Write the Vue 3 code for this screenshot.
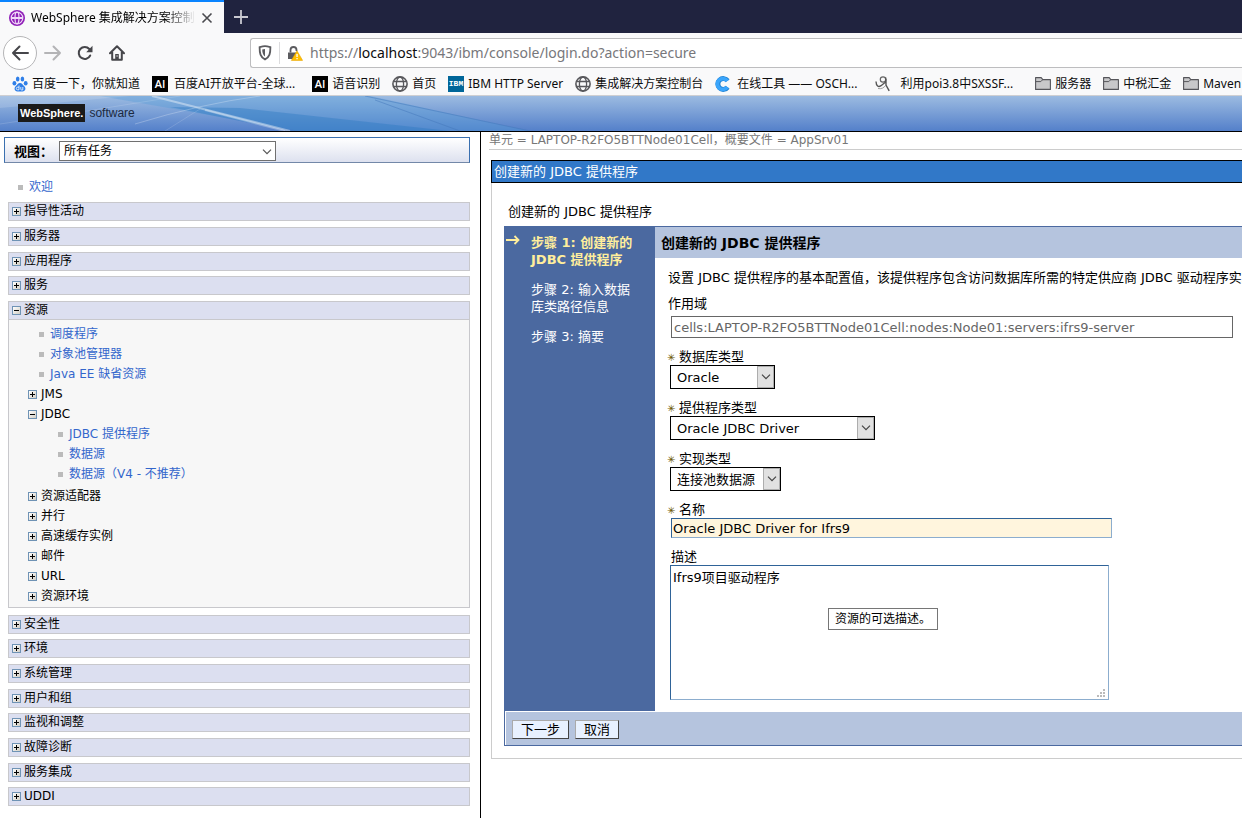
<template>
  <div class="browser">
    <header class="chrome">
      <div class="tab-strip">
        <div class="tab">
          <svg class="tab-icon" viewBox="0 0 16 16">
            <circle cx="8" cy="8" r="8" fill="#8f1fb8" />
            <g fill="none" stroke="#f0d8f8">
              <circle cx="8" cy="8" r="5.800" stroke-width="1.200" />
              <ellipse cx="8" cy="8" rx="2" ry="5.800" stroke-width="1.200" />
              <path d="M2 8h12" stroke-width="2" />
            </g>
          </svg>
          <span class="tab-title">WebSphere 集成解决方案控制台</span>
          <button class="plain" aria-label="关闭标签页">
            <svg width="12" height="12" viewBox="0 0 12 12">
              <path d="M1.5 1.5l9 9M10.5 1.5l-9 9" stroke="#4a4a4f" stroke-width="1.6" />
            </svg>
          </button>
        </div>
        <button class="plain new-tab" aria-label="新建标签页">
          <svg width="14" height="14" viewBox="0 0 14 14">
            <path d="M7 0v14M0 7h14" stroke="#c9c9d1" stroke-width="1.8" />
          </svg>
        </button>
      </div>

      <div class="nav-bar">
        <button class="plain back" aria-label="后退">
          <svg width="18" height="16" viewBox="0 0 18 16">
            <path d="M8.500 1.500L2 8l6.500 6.500M2 8h15" fill="none" stroke="#46464a" stroke-width="2" stroke-linecap="round" stroke-linejoin="round" />
          </svg>
        </button>
        <div class="nav-buttons">
          <button class="plain" aria-label="前进">
            <svg width="18" height="16" viewBox="0 0 18 16">
              <path d="M9.500 1.500L16 8l-6.500 6.500M16 8H1" fill="none" stroke="#b4b4b6" stroke-width="2" stroke-linecap="round" stroke-linejoin="round" />
            </svg>
          </button>
          <button class="plain" aria-label="刷新">
            <svg width="16" height="16" viewBox="0 0 16 16">
              <path d="M13.200 10.500A6 6 0 1 1 12.300 4" fill="none" stroke="#46464a" stroke-width="2" stroke-linecap="round" />
              <path d="M15.500 0.800v6.400H9.200z" fill="#46464a" />
            </svg>
          </button>
          <button class="plain" aria-label="主页">
            <svg width="16" height="16" viewBox="0 0 16 16">
              <path d="M1 8.200L8 1.300l7 6.900M3.200 7v7.800h9.600V7" fill="none" stroke="#46464a" stroke-width="2" stroke-linejoin="round" stroke-linecap="round" />
              <path d="M6.200 14.500V9h3.600v5.500z" fill="#46464a" />
              <path d="M7.600 10.200h.9v1.500h-.9z" fill="#f9f9fa" />
            </svg>
          </button>
        </div>
        <div class="url-bar">
          <svg width="14" height="16" viewBox="0 0 14 16">
            <path d="M7 1.200C5 1.200 3 1.800 1.600 2.200c0 6 .6 9.800 5.400 12.200 4.800-2.400 5.400-6.200 5.400-12.200C11 1.800 9 1.200 7 1.200z" fill="none" stroke="#5b5b5f" stroke-width="1.800" />
            <path d="M7 4v7.600C4.900 10 4.300 7.800 4.200 4.600z" fill="#5b5b5f" />
          </svg>
          <span class="url-split"></span>
          <svg width="16" height="16" viewBox="0 0 16 16">
            <path d="M3.500 7.500V5a3 3 0 0 1 6 0v1" fill="none" stroke="#5b5b5f" stroke-width="1.800" />
            <path d="M1 7.500h10V14H1z" fill="#5b5b5f" />
            <path d="M10 5.800L15.600 15.400H4.400z" fill="#ffbf00" stroke="#e8a400" stroke-width=".6" stroke-linejoin="round" />
            <path d="M9.400 9h1.300v3H9.400zM9.400 13h1.300v1.200H9.400z" fill="#fff" />
          </svg>
          <span class="url-text">https://<b>localhost</b>:9043/ibm/console/login.do?action=secure</span>
        </div>
      </div>

      <nav class="bookmarks">
        <a v-for="(mark, i) in bookmarks" :key="i" href="#" :class="mark.icon">
          <svg v-if="mark.icon === 'paw'" viewBox="0 0 16 16">
            <g fill="#2f7fe8">
              <ellipse cx="2.400" cy="7.200" rx="1.900" ry="2.300" />
              <ellipse cx="5.700" cy="3" rx="1.800" ry="2.500" />
              <ellipse cx="10.400" cy="3" rx="1.800" ry="2.500" />
              <ellipse cx="13.700" cy="7.200" rx="1.900" ry="2.300" />
              <path d="M8 7c2 0 2.600 1.800 4 3 2.600 2.200 1.300 5.400-1.300 5.400H5.300C2.700 15.400 1.400 12.200 4 10c1.400-1.200 2-3 4-3z" />
            </g>
            <path d="M7 9.500v4.300H5.600a1.300 1.300 0 0 1 0-2.600H7M8.800 11v2.300c0 .6.300.7 2 .6V11" fill="none" stroke="#fff" stroke-width=".8" />
          </svg>
          <svg v-else-if="mark.icon === 'ai'" viewBox="0 0 16 16">
            <rect width="16" height="16" fill="#000" />
            <text x="8" y="12" text-anchor="middle" font-family="Open Sans" font-size="11" font-weight="600" fill="#fff">AI</text>
          </svg>
          <svg v-else-if="mark.icon === 'globe'" viewBox="0 0 16 16">
            <g fill="none" stroke="#58585c" stroke-width="1.300">
              <circle cx="8" cy="8" r="7.100" stroke-width="1.600" />
              <ellipse cx="8" cy="8" rx="3.600" ry="7" />
              <path d="M1.500 5.500h13M1.500 10.500h13" />
            </g>
          </svg>
          <svg v-else-if="mark.icon === 'ibm'" viewBox="0 0 16 16">
            <rect width="16" height="16" fill="#006699" />
            <text x="8" y="10" text-anchor="middle" font-family="Liberation Mono" font-size="8" font-weight="700" fill="#fff">IBM</text>
          </svg>
          <svg v-else-if="mark.icon === 'osc'" viewBox="0 0 16 16">
            <path d="M12.600 4.800A5.400 5.400 0 1 0 12.600 11.200" fill="none" stroke="#1d7fd0" stroke-width="5" />
            <path d="M12.300 5A5.400 5.400 0 1 0 12.300 11" fill="none" stroke="#3aa5fb" stroke-width="3.800" />
          </svg>
          <svg v-else-if="mark.icon === 'figure'" viewBox="0 0 16 16">
            <circle cx="8" cy="3.500" r="2.700" fill="none" stroke="#666" stroke-width="1.200" />
            <path d="M1 5.500c.2 4.500 2.400 6 5 4.200L10.700 6V1.500M11 3v6l3.200 5.800" fill="none" stroke="#555" stroke-width="1.400" />
            <path d="M3 12.500c3 .8 6-.5 8-3.500" fill="none" stroke="#888" stroke-width=".8" />
          </svg>
          <svg v-else viewBox="0 0 16 16">
            <path d="M.6 13.400V1.600h5.600l1.600 2h7.600v9.800z" fill="#c8c8ca" stroke="#55555a" stroke-width="1.100" stroke-linejoin="round" />
            <path d="M.6 5.600h5.200l2-2" fill="none" stroke="#55555a" />
          </svg>
          <span>{{ mark.text }}</span>
        </a>
      </nav>
    </header>

    <div class="banner">
      <svg class="banner-art" width="540" height="35" viewBox="0 0 540 35">
        <path d="M100 0H370L530 35H300z" fill="#4f9bd6" opacity=".35" />
        <path d="M170 11L240 12 450 35H290z" fill="#2a78c0" opacity=".4" />
        <path d="M0 12L130 0H0z" fill="#fff" opacity=".14" />
        <g fill="none" stroke="#fff">
          <path d="M152 0L290 35" opacity=".4" stroke-width="2" />
          <path d="M205 14L285 35" opacity=".3" stroke-width="2" />
          <path d="M135 28Q200 8 260 0" opacity=".25" />
          <path d="M165 35L200 13" opacity=".15" />
          <path d="M0 28Q90 15 180 0" opacity=".15" />
        </g>
        <path d="M365 0L530 35M375 4L460 35" fill="none" stroke="#4377bb" opacity=".5" />
      </svg>
      <span class="logo">WebSphere.</span>
      <span class="logo-note">software</span>
    </div>

    <div class="console">
      <aside class="sidebar">
        <div class="view-bar">
          <label for="view">视图：</label>
          <span class="picker">
            <select id="view" v-model="view">
              <option>所有任务</option>
            </select>
            <svg class="chevron" width="10" height="6" viewBox="0 0 10 6">
              <path d="M1 .7l4 4 4-4" fill="none" stroke="#555" stroke-width="1.200" />
            </svg>
          </span>
        </div>
        <a href="#" class="leaf welcome">欢迎</a>

        <section v-for="group in groups" :key="group.name" class="group">
          <button class="group-head" @click="group.open = !group.open">
            <span class="toggle" :class="{ open: group.open }"></span>{{ group.name }}
          </button>
          <div v-if="group.open && group.items" class="group-body">
            <template v-for="item in group.items" :key="item.name">
              <a v-if="item.link" href="#" class="leaf">{{ item.name }}</a>
              <template v-else>
                <button class="branch" @click="item.open = !item.open">
                  <span class="toggle" :class="{ open: item.open }"></span>{{ item.name }}
                </button>
                <div v-if="item.open && item.items" class="sub">
                  <a v-for="sub in item.items" :key="sub" href="#" class="leaf">{{ sub }}</a>
                </div>
              </template>
            </template>
          </div>
        </section>
      </aside>

      <main class="content">
        <p class="scope-line">单元 = LAPTOP-R2FO5BTTNode01Cell，概要文件 = AppSrv01</p>
        <div class="portlet">
          <h1>创建新的 JDBC 提供程序</h1>
          <div class="portlet-body">
            <h2>创建新的 JDBC 提供程序</h2>
            <form class="wizard" @submit.prevent>
              <ol class="steps">
                <li v-for="(step, i) in steps" :key="step" :class="{ current: i === 0 }">
                  <svg v-if="i === 0" class="arrow" width="14" height="10" viewBox="0 0 14 10">
                    <path d="M0 5h12M8.500 1l4 4-4 4" fill="none" stroke="#ffee9c" stroke-width="1.800" />
                  </svg>
                  步骤 {{ i + 1 }}: {{ step }}
                </li>
              </ol>
              <div class="step-body">
                <h3>创建新的 JDBC 提供程序</h3>
                <div class="fields">
                  <p>设置 JDBC 提供程序的基本配置值，该提供程序包含访问数据库所需的特定供应商 JDBC 驱动程序实现类。</p>
                  <label for="scope" class="scope-label">作用域</label>
                  <input id="scope" class="scope" :value="scope" readonly />

                  <template v-for="field in selects" :key="field.id">
                    <label :for="field.id" class="required">{{ field.label }}</label>
                    <span class="picker" :class="field.id">
                      <select :id="field.id">
                        <option>{{ field.value }}</option>
                      </select>
                      <span class="drop">
                        <svg width="10" height="6" viewBox="0 0 10 6">
                          <path d="M1 .7l4 4 4-4" fill="none" stroke="#444" stroke-width="1.200" />
                        </svg>
                      </span>
                    </span>
                  </template>

                  <label for="name" class="required">名称</label>
                  <input id="name" v-model="name" class="name" />
                  <label for="description" class="desc-label">描述</label>
                  <div class="desc">
                    <textarea id="description" v-model="description"></textarea>
                    <svg class="grip" width="8" height="8" viewBox="0 0 8 8">
                      <path d="M6 0h2v2H6zM3 3h2v2H3zM6 3h2v2H6zM0 6h2v2H0zM3 6h2v2H3zM6 6h2v2H6z" fill="#bbb" />
                    </svg>
                    <span class="tooltip">资源的可选描述。</span>
                  </div>
                </div>
              </div>
              <div class="actions">
                <button>下一步</button>
                <button type="button">取消</button>
              </div>
            </form>
          </div>
        </div>
      </main>
    </div>
  </div>
</template>

<script setup>
import { ref } from 'vue'

const bookmarks = [
  { icon: 'paw', text: '百度一下，你就知道' },
  { icon: 'ai', text: '百度AI开放平台-全球...' },
  { icon: 'ai', text: '语音识别' },
  { icon: 'globe', text: '首页' },
  { icon: 'ibm', text: 'IBM HTTP Server' },
  { icon: 'globe', text: '集成解决方案控制台' },
  { icon: 'osc', text: '在线工具 —— OSCH...' },
  { icon: 'figure', text: '利用poi3.8中SXSSF...' },
  { icon: 'folder', text: '服务器' },
  { icon: 'folder', text: '中税汇金' },
  { icon: 'folder', text: 'Maven' }
]

const view = ref('所有任务')
const groups = ref([
  { name: '指导性活动' },
  { name: '服务器' },
  { name: '应用程序' },
  { name: '服务' },
  {
    name: '资源',
    open: true,
    items: [
      { name: '调度程序', link: true },
      { name: '对象池管理器', link: true },
      { name: 'Java EE 缺省资源', link: true },
      { name: 'JMS' },
      { name: 'JDBC', open: true, items: ['JDBC 提供程序', '数据源', '数据源（V4 - 不推荐）'] },
      { name: '资源适配器' },
      { name: '并行' },
      { name: '高速缓存实例' },
      { name: '邮件' },
      { name: 'URL' },
      { name: '资源环境' }
    ]
  },
  { name: '安全性' },
  { name: '环境' },
  { name: '系统管理' },
  { name: '用户和组' },
  { name: '监视和调整' },
  { name: '故障诊断' },
  { name: '服务集成' },
  { name: 'UDDI' }
])

const steps = ['创建新的 JDBC 提供程序', '输入数据库类路径信息', '摘要']
const scope = 'cells:LAPTOP-R2FO5BTTNode01Cell:nodes:Node01:servers:ifrs9-server'
const selects = [
  { id: 'database', label: '数据库类型', value: 'Oracle' },
  { id: 'provider', label: '提供程序类型', value: 'Oracle JDBC Driver' },
  { id: 'implementation', label: '实现类型', value: '连接池数据源' }
]
const name = ref('Oracle JDBC Driver for Ifrs9')
const description = ref('Ifrs9项目驱动程序')
</script>

<style>
body {
  margin: 0;
  background: #fff;
}
</style>

<style scoped>
* {
  box-sizing: border-box;
}

.browser {
  display: flex;
  flex-direction: column;
  min-height: 100vh;
  overflow: hidden;
  color: #000;
  font: 13px/17px "DejaVu Sans", "Noto Sans CJK SC", sans-serif;
}

button,
input,
select,
textarea {
  margin: 0;
  font: inherit;
  color: inherit;
}

a {
  color: #3366cc;
  text-decoration: none;
}

.plain {
  display: flex;
  align-items: center;
  justify-content: center;
  padding: 0;
  border: 0;
  background: none;
}

/* browser chrome */
.chrome {
  background: #f9f9fa;
  border-bottom: 1px solid #cfcfd2;
  font: 12px/16px "Noto Sans", "Noto Sans CJK SC", sans-serif;
}

.tab-strip {
  display: flex;
  height: 33px;
  background: #20233f;
}

.tab {
  display: flex;
  align-items: center;
  width: 224px;
  padding: 0 11px 0 9px;
  border-top: 2px solid #0a84ff;
  background: #f9f9fa;
}

.tab-icon {
  flex: none;
  width: 16px;
  height: 16px;
}

.tab-title {
  flex: 1;
  margin: 0 5px 0 6px;
  overflow: hidden;
  white-space: nowrap;
  mask-image: linear-gradient(to left, transparent, #000 30px);
}

.new-tab {
  width: 34px;
}

.nav-bar {
  display: flex;
  align-items: center;
  height: 39px;
  padding-left: 3px;
}

.nav-buttons {
  display: flex;
  gap: 8px;
  margin: 0 121px 0 4px;
}

.nav-buttons .plain {
  width: 24px;
}

.back {
  width: 34px;
  height: 34px;
  border: 1px solid #b5b5b7;
  border-radius: 50%;
  background: #fff;
}

.url-bar {
  display: flex;
  flex: 1;
  align-items: center;
  height: 30px;
  padding-left: 7px;
  border: 1px solid #bdbdbf;
  border-right: 0;
  border-radius: 3px 0 0 3px;
  background: #fff;
}

.url-split {
  width: 1px;
  height: 22px;
  margin: 0 7px;
  background: #dcdcde;
}

.url-text {
  margin-left: 7px;
  color: #77777b;
  font-size: 14px;
  white-space: nowrap;
}

.url-text b {
  color: #0c0c0d;
  font-weight: 400;
}

.bookmarks {
  display: flex;
  gap: 12px;
  height: 23px;
  padding-left: 12px;
  overflow: hidden;
}

.bookmarks a {
  display: flex;
  flex: none;
  align-items: center;
  gap: 4px;
  color: #0c0c0d;
  white-space: nowrap;
}

.bookmarks a:nth-child(2),
.bookmarks .osc {
  gap: 6px;
  padding-right: 5px;
}

.bookmarks .figure {
  gap: 10px;
  padding-right: 10px;
}

.bookmarks svg {
  width: 16px;
  height: 16px;
}

/* console */
.banner {
  position: relative;
  display: flex;
  align-items: center;
  gap: 4px;
  height: 36px;
  padding: 0 0 2px 18px;
  border-bottom: 1px solid #000;
  background: linear-gradient(#9cbbe1, #5480ca);
}

.banner-art {
  position: absolute;
  top: 0;
  left: 0;
}

.logo,
.logo-note {
  position: relative;
  font: 12px/18px "Liberation Sans", sans-serif;
  color: #1c2a40;
}

.logo {
  padding: 0 2px;
  background: #1a1a1a;
  color: #fff;
  font-size: 11px;
  font-weight: 700;
}

.console {
  display: flex;
  flex: 1;
}

.sidebar {
  flex: none;
  width: 481px;
  padding: 5px 10px 12px 4px;
  border-right: 1px solid #000;
  font-size: 12px;
}

.view-bar {
  display: flex;
  align-items: center;
  height: 26px;
  padding: 2px 0 0 9px;
  border: 1px solid #3a70b0;
  border-bottom-color: #7388a8;
  background: linear-gradient(#fff, #dde1ef);
}

.view-bar label {
  width: 45px;
  font-size: 13px;
  font-weight: 700;
  white-space: nowrap;
}

.view-bar .picker {
  width: 217px;
  height: 20px;
}

.picker {
  position: relative;
  display: block;
}

.picker select {
  width: 100%;
  height: 100%;
  padding: 0 4px;
  border: 1px solid #707070;
  border-radius: 0;
  background: #fff;
  appearance: none;
}

.chevron {
  position: absolute;
  top: 8px;
  right: 4px;
  pointer-events: none;
}

.leaf {
  display: flex;
  align-items: center;
  gap: 6px;
  height: 20px;
  line-height: 20px;
}

.leaf::before {
  content: "";
  width: 5px;
  height: 5px;
  background: #bbb;
}

.welcome {
  margin: 14px 0 5px 14px;
}

.group {
  margin: 0 0 6px 4px;
}

.group:nth-of-type(3n) {
  margin-bottom: 5px;
}

.group-head,
.branch {
  display: flex;
  align-items: center;
  gap: 3px;
  width: 100%;
  padding: 0 0 0 3px;
  text-align: left;
}

.group-head {
  height: 19px;
  border: 1px solid #c8c8cc;
  background: #dcdff0;
  line-height: 17px;
}

.branch {
  gap: 4px;
  height: 20px;
  padding-left: 19px;
  border: 0;
  background: none;
  line-height: 20px;
}

.toggle {
  position: relative;
  flex: none;
  width: 9px;
  height: 9px;
  border: 1px solid #6f93b5;
  background: linear-gradient(135deg, #fff, #d2cec4);
}

.toggle::before,
.toggle::after {
  content: "";
  position: absolute;
  top: 3px;
  left: 1px;
  width: 5px;
  height: 1px;
  background: #000;
}

.toggle::after {
  top: 1px;
  left: 3px;
  width: 1px;
  height: 5px;
}

.toggle.open::after {
  display: none;
}

.group-body {
  margin-bottom: 7px;
  padding: 4px 0 1px;
  border: 1px solid #c8c8cc;
  border-top: 0;
  background: #f7f7f7;
}

.group-body .leaf {
  margin-left: 30px;
}

.sub {
  padding-bottom: 2px;
}

.group-body .sub .leaf {
  margin-left: 49px;
}

.content {
  flex: 1;
  min-width: 0;
  padding-left: 8px;
  white-space: nowrap;
}

.scope-line {
  margin: 0 0 10px;
  border-bottom: 1px solid #ccc;
  color: #777;
  font-size: 12px;
  line-height: 17px;
}

.portlet {
  margin-left: 2px;
}

h1,
h2,
h3 {
  margin: 0;
  font-size: 13px;
  font-weight: 400;
}

h1 {
  height: 23px;
  padding-left: 2px;
  border: 1px solid #000;
  border-right: 0;
  background: #3178c8;
  color: #fff;
  line-height: 22px;
}

.portlet-body {
  padding: 20px 0 12px 12px;
  border: 1px solid #ccc;
  border-width: 0 0 1px 1px;
}

h2 {
  margin: 0 0 6px 4px;
}

.wizard {
  display: grid;
  grid-template-columns: 151px minmax(0, 1fr);
}

.steps {
  margin: 0;
  padding: 8px 14px 0 27px;
  background: #4b69a0;
  color: #fff;
  list-style: none;
  white-space: normal;
}

.steps li {
  position: relative;
  margin-bottom: 13px;
}

.steps .current {
  color: #ffee9c;
  font-weight: 700;
}

.arrow {
  position: absolute;
  top: 1px;
  left: -25px;
}

.step-body {
  border-top: 1px solid #4b69a0;
}

h3 {
  height: 31px;
  padding-left: 6px;
  background: #b5c4de;
  font-size: 14px;
  font-weight: 700;
  line-height: 32px;
}

.fields {
  padding: 11px 0 11px 15px;
  overflow: hidden;
}

.fields p {
  margin: 0 0 9px -2px;
}

.fields label {
  display: block;
  height: 17px;
  line-height: 18px;
}

.fields .scope-label {
  height: 21px;
  margin-left: -2px;
}

.fields input {
  display: block;
  margin: 0 0 10px 1px;
  padding: 0 2px;
  border: 1px solid #2f6398;
  border-color: #2f6398 #8cadce #8cadce #2f6398;
}

.fields input.scope {
  width: 562px;
  height: 22px;
  border-color: #666;
  color: #666;
}

.fields input.name {
  width: 441px;
  height: 20px;
  padding: 0 1px;
  background: #fff5dd;
}

.required::before {
  content: "✳";
  display: inline-block;
  width: 12px;
  margin-left: -3px;
  color: #6b5500;
  font-size: 10px;
  font-weight: 700;
}

.fields .picker {
  height: 24px;
  margin-bottom: 10px;
}

.fields .picker select {
  padding-left: 6px;
  border-color: #000;
}

.database {
  width: 105px;
}

.provider {
  width: 205px;
}

.implementation {
  width: 111px;
}

.drop {
  position: absolute;
  top: 1px;
  right: 1px;
  display: flex;
  align-items: center;
  justify-content: center;
  width: 17px;
  height: 22px;
  border: 1px solid #adadad;
  background: #e1e1e1;
  pointer-events: none;
}

.fields .desc-label {
  margin-left: 1px;
}

.desc {
  position: relative;
  width: 439px;
  height: 135px;
}

.desc textarea {
  width: 100%;
  height: 100%;
  padding: 3px 2px;
  border: 1px solid #2f6398;
  border-color: #2f6398 #8cadce #8cadce #2f6398;
  resize: none;
}

.grip {
  position: absolute;
  right: 4px;
  bottom: 3px;
}

.tooltip {
  position: absolute;
  top: 43px;
  left: 158px;
  height: 22px;
  padding: 0 6px;
  border: 1px solid #767676;
  background: #fff;
  font-size: 12px;
  line-height: 20px;
}

.actions {
  display: flex;
  grid-column: 1 / -1;
  gap: 6px;
  padding: 9px 0 6px 7px;
  border: 1px solid #4b69a0;
  border-width: 0 0 1px 1px;
  background: #b5c4de;
  box-shadow: inset 1px 1px #fff;
}

.actions button {
  height: 19px;
  padding: 0 8px;
  border: 1px solid #aaa;
  border-right-color: #444;
  border-bottom-color: #444;
  background: #e8f1ff;
  line-height: 17px;
}
</style>
